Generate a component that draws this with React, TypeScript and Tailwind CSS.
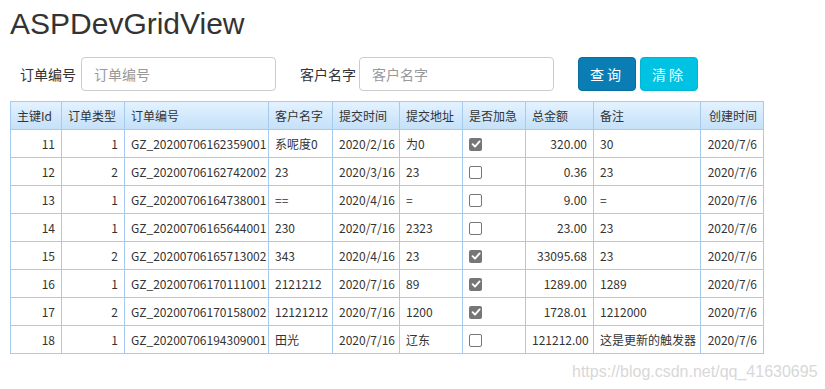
import React from "react";

type Row = {
  id: number;
  type: number;
  no: string;
  name: string;
  time: string;
  addr: string;
  urgent: boolean;
  amount: string;
  note: string;
  created: string;
};

const rows: Row[] = [
  { id: 11, type: 1, no: "GZ_20200706162359001", name: "系呢度0", time: "2020/2/16", addr: "为0", urgent: true, amount: "320.00", note: "30", created: "2020/7/6" },
  { id: 12, type: 2, no: "GZ_20200706162742002", name: "23", time: "2020/3/16", addr: "23", urgent: false, amount: "0.36", note: "23", created: "2020/7/6" },
  { id: 13, type: 1, no: "GZ_20200706164738001", name: "==", time: "2020/4/16", addr: "=", urgent: false, amount: "9.00", note: "=", created: "2020/7/6" },
  { id: 14, type: 1, no: "GZ_20200706165644001", name: "230", time: "2020/7/16", addr: "2323", urgent: false, amount: "23.00", note: "23", created: "2020/7/6" },
  { id: 15, type: 2, no: "GZ_20200706165713002", name: "343", time: "2020/4/16", addr: "23", urgent: true, amount: "33095.68", note: "23", created: "2020/7/6" },
  { id: 16, type: 1, no: "GZ_20200706170111001", name: "2121212", time: "2020/7/16", addr: "89", urgent: true, amount: "1289.00", note: "1289", created: "2020/7/6" },
  { id: 17, type: 2, no: "GZ_20200706170158002", name: "12121212", time: "2020/7/16", addr: "1200", urgent: true, amount: "1728.01", note: "1212000", created: "2020/7/6" },
  { id: 18, type: 1, no: "GZ_20200706194309001", name: "田光", time: "2020/7/16", addr: "辽东", urgent: false, amount: "121212.00", note: "这是更新的触发器", created: "2020/7/6" },
];

const headers = ["主键Id", "订单类型", "订单编号", "客户名字", "提交时间", "提交地址", "是否加急", "总金额", "备注", "创建时间"];
const widths = ["w-[51px]", "w-[63px]", "w-[144px]", "w-[64px]", "w-[67px]", "w-[63px]", "w-[63px]", "w-[68px]", "w-[107px]", "w-[63px]"];

function Check({ on }: { on: boolean }) {
  if (on) {
    return (
      <span className="inline-flex w-[13px] h-[13px] rounded-[2px] bg-[#767676] items-center justify-center align-middle">
        <svg width="10" height="10" viewBox="0 0 10 10">
          <path d="M1.6 5.2 L4 7.6 L8.6 2.4" stroke="white" strokeWidth="1.9" fill="none" strokeLinecap="round" strokeLinejoin="round" />
        </svg>
      </span>
    );
  }
  return <span className="inline-block w-[13px] h-[13px] rounded-[2px] border border-[#767676] bg-white align-middle" />;
}

export default function App() {
  const cell = "border border-[#a6cbef] h-[28px] px-[6px] py-0 whitespace-nowrap";
  return (
    <div className="relative w-[825px] h-[389px] bg-white overflow-hidden px-[10px] pt-[6px] text-[#333]" style={{ fontFamily: '"Noto Sans CJK SC", "Noto Sans", sans-serif' }}>
      <h1 className="text-[30px] leading-[36px] text-[#333] m-0" style={{ fontFamily: '"Liberation Sans", Arial, sans-serif' }}>
        ASPDevGridView
      </h1>
      <div className="flex items-center mt-[15px] pl-[10px] h-[34px]">
        <label className="text-[14px] text-[#333] mr-[5px]">订单编号</label>
        <input className="w-[195px] h-[34px] border border-[#ccc] rounded-[4px] px-3 text-[14px] placeholder:text-[#999] outline-none" placeholder="订单编号" />
        <label className="text-[14px] text-[#333] ml-[24px] mr-[3px]">客户名字</label>
        <input className="w-[195px] h-[34px] border border-[#ccc] rounded-[4px] px-3 text-[14px] placeholder:text-[#999] outline-none" placeholder="客户名字" />
        <button className="ml-[24px] w-[58px] h-[34px] rounded-[4px] bg-[#0a7db4] border border-[#086e9f] text-white text-[14px] tracking-[3px]">查询</button>
        <button className="ml-[4px] w-[58px] h-[34px] rounded-[4px] bg-[#00c3e3] border border-[#00b4d4] text-white text-[14px] tracking-[3px]">清除</button>
      </div>
      <table className="mt-[10px] border-collapse text-[12px] text-[#333] table-fixed w-[753px]">
        <colgroup>
          {widths.map((w, i) => (
            <col key={i} className={w} />
          ))}
        </colgroup>
        <thead>
          <tr className="bg-gradient-to-b from-[#e4f2ff] via-[#d3e9fc] to-[#c4e0f8]">
            {headers.map((h, i) => (
              <th key={i} className={`${cell} font-normal text-left ${i === 9 ? "text-right" : ""}`}>
                {h}
              </th>
            ))}
          </tr>
        </thead>
        <tbody>
          {rows.map((r) => (
            <tr key={r.id}>
              <td className={`${cell} text-right`}>{r.id}</td>
              <td className={`${cell} text-right`}>{r.type}</td>
              <td className={cell}>{r.no}</td>
              <td className={cell}>{r.name}</td>
              <td className={cell}>{r.time}</td>
              <td className={cell}>{r.addr}</td>
              <td className={`${cell} leading-none`}>
                <Check on={r.urgent} />
              </td>
              <td className={`${cell} text-right`}>{r.amount}</td>
              <td className={cell}>{r.note}</td>
              <td className={`${cell} text-right`}>{r.created}</td>
            </tr>
          ))}
        </tbody>
      </table>
      <div className="absolute left-[572px] top-[360px] text-[16px] text-[#d8d8d8]" style={{ fontFamily: '"Liberation Sans", Arial, sans-serif' }}>
        https://blog.csdn.net/qq_41630695
      </div>
    </div>
  );
}
